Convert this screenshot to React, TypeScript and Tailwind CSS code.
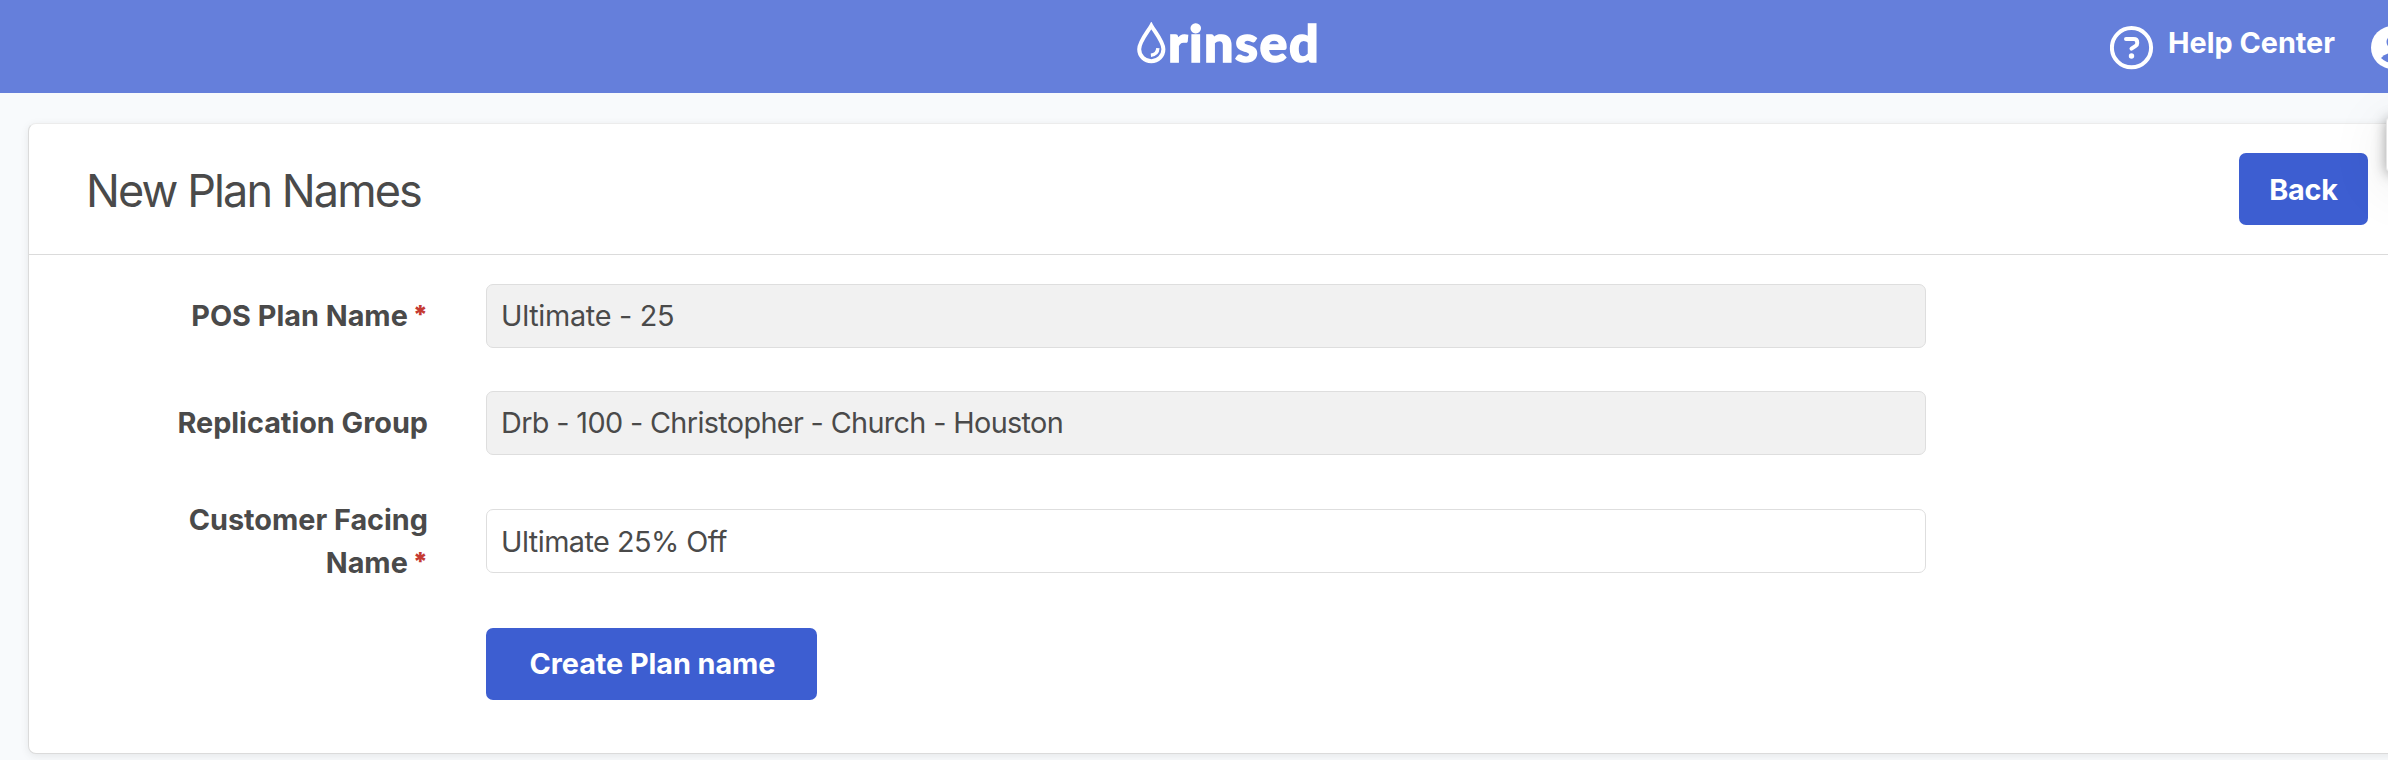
import type { ReactNode } from "react";

function Logo() {
  return (
    <div className="flex h-[93px] items-start pt-[22px] text-white">
      <svg className="shrink-0" width="29" height="42" viewBox="0 0 29 42" fill="none">
        <path
          d="M14.3 3.6C11 9.6 2.2 19.5 2.2 27.2a12.1 12.1 0 0 0 24.2 0C26.4 19.5 17.6 9.6 14.3 3.6Z"
          stroke="currentColor"
          strokeWidth="4"
          strokeLinejoin="miter"
          strokeMiterlimit="8"
        />
        <path d="M20.9 26.2c-.3 4.200-2.800 6.700-7 7.100" stroke="currentColor" strokeWidth="3.400" />
      </svg>
      <span className="ml-[2px] -mt-[11px] font-['Lato',sans-serif] text-[52px] leading-[62px] font-black tracking-[1.500px] [-webkit-text-stroke:1.5px_white]">
        rinsed
      </span>
    </div>
  );
}

function Header() {
  return (
    <nav className="relative z-10 grid h-[93px] grid-cols-[1137px_1fr_auto] bg-[#657fdb]">
      <div />
      <Logo />
      <div className="flex w-[278px] items-start overflow-hidden pt-[26px] text-white">
        <svg className="shrink-0" width="44" height="44" viewBox="0 0 44 44" fill="none">
          <circle cx="21.500" cy="21.700" r="19.600" stroke="currentColor" strokeWidth="4" />
          <path
            d="M16 13h7.600q3.600 0 3.600 3.300v1q0 1.700-1.500 2.600L21.500 22.600"
            stroke="currentColor"
            strokeWidth="4"
            strokeLinecap="round"
            strokeLinejoin="round"
          />
          <circle cx="21.500" cy="30" r="2.700" fill="currentColor" />
        </svg>
        <span className="ml-[14px] -mt-[5px] w-[206px] shrink-0 text-[28.800px] leading-[43px] font-bold">
          Help Center
        </span>
        <svg className="-ml-[3px] shrink-0" width="43" height="43" viewBox="0 0 43 43">
          <circle cx="21.500" cy="21.500" r="21.500" fill="currentColor" />
          <circle cx="22.500" cy="16" r="7" fill="#657fdb" />
          <path d="M10 32Q14 27 22 27T34 32a17 17 0 0 1-24 0Z" fill="#657fdb" />
        </svg>
      </div>
    </nav>
  );
}

function Row({ label, required, children }: { label: string; required?: boolean; children: ReactNode }) {
  return (
    <div className="flex items-center gap-[58px]">
      <label className="w-[266px] pb-px text-right font-bold">
        {label}
        {required && <span className="align-[3px] text-[25px] leading-none font-black text-[#c53a32]"> *</span>}
      </label>
      {children}
    </div>
  );
}

const field = "h-16 w-[1440px] rounded-[7px] border border-[#dedede] px-[14px] text-[#4a4a4a] outline-none";

export default function App() {
  return (
    <div className="relative h-[760px] overflow-hidden bg-[#f8fafc] font-['Inter',sans-serif] text-[28.800px] leading-[43px] text-[#4a4a4a]">
      <Header />
      <main className="mt-[30px] ml-7 h-[631px] w-[2420px] rounded-[8px] border border-[#dbdbdb] border-t-[#ececec] bg-white shadow-[0_2px_8px_rgba(10,10,10,0.080)]">
        <div className="flex h-[131px] items-center border-b border-[#dbdbdb] pl-[57px]">
          <h1 className="w-[2153px] pt-[2px] text-[45px] font-normal tracking-[-1.900px]">New Plan Names</h1>
          <button className="h-[72px] w-[129px] rounded-[7px] bg-[#3d5ed1] font-bold tracking-[-0.200px] text-white">
            Back
          </button>
        </div>
        <form className="pt-[29px] pl-[133px]">
          <Row label="POS Plan Name" required>
            <input className={`${field} bg-[#f1f1f1] pb-[2px] tracking-[-0.300px]`} defaultValue="Ultimate - 25" readOnly />
          </Row>
          <div className="mt-[43px]">
            <Row label="Replication Group">
              <input
                className={`${field} bg-[#f1f1f1] pb-[2px] tracking-[-0.640px]`}
                defaultValue="Drb - 100 - Christopher - Church - Houston"
                readOnly
              />
            </Row>
          </div>
          <div className="mt-[43px]">
            <Row label="Customer Facing Name" required>
              <input className={`${field} -mt-px bg-white tracking-[-0.520px]`} defaultValue="Ultimate 25% Off" />
            </Row>
          </div>
          <button
            type="button"
            className="mt-[43px] ml-[324px] h-[72px] w-[331px] rounded-[7px] bg-[#3d5ed1] pb-px pl-[2px] font-bold tracking-[-0.050px] text-white"
          >
            Create Plan name
          </button>
        </form>
      </main>
      <div className="absolute top-[117px] left-[2386px] h-[55px] w-20 rounded-l-[4px] border border-[#e6e6e6] bg-white shadow-[0_2px_14px_rgba(0,0,0,0.350),0_10px_60px_rgba(0,0,0,0.100)]" />
    </div>
  );
}
